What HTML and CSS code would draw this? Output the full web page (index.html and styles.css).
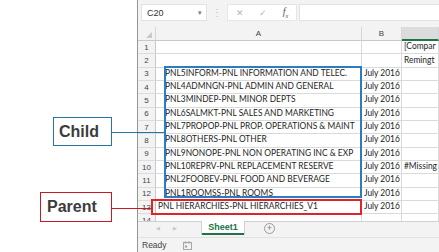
FILE: index.html
```html
<!DOCTYPE html>
<html lang="en">
<head>
    <meta charset="UTF-8">
    <title>PNL Hierarchies</title>
    <link rel="stylesheet" href="styles.css">
</head>
<body>
    <div class="shot">
        <div class="margin"></div>

        <div class="excel">
            <div class="fbar">
                <div class="namebox"><span>C20</span><span class="dd">&#9662;</span></div>
                <div class="grip">&#8942;</div>
                <div class="fbtns">
                    <span class="cancel">&#10005;</span>
                    <span class="ok">&#10003;</span>
                    <span class="fx">f<sub>x</sub></span>
                </div>
                <div class="finput"></div>
            </div>

            <div class="sheet">
                <div class="hd corner"><span class="tri"></span></div>
                <div class="hd">A</div>
                <div class="hd">B</div>
                <div class="hd sel"></div>

                <div class="rh">1</div><div class="c"></div><div class="c"></div><div class="c"><span>[Compar</span></div>
                <div class="rh">2</div><div class="c"></div><div class="c"></div><div class="c"><span>Remingt</span></div>
                <div class="rh">3</div><div class="c ind"><span>PNL5INFORM-PNL INFORMATION AND TELEC.</span></div><div class="c"><span>July 2016</span></div><div class="c"></div>
                <div class="rh">4</div><div class="c ind"><span>PNL4ADMNGN-PNL ADMIN AND GENERAL</span></div><div class="c"><span>July 2016</span></div><div class="c"></div>
                <div class="rh">5</div><div class="c ind"><span>PNL3MINDEP-PNL MINOR DEPTS</span></div><div class="c"><span>July 2016</span></div><div class="c"></div>
                <div class="rh">6</div><div class="c ind"><span>PNL6SALMKT-PNL SALES AND MARKETING</span></div><div class="c"><span>July 2016</span></div><div class="c"></div>
                <div class="rh">7</div><div class="c ind"><span>PNL7PROPOP-PNL PROP. OPERATIONS &amp; MAINT</span></div><div class="c"><span>July 2016</span></div><div class="c"></div>
                <div class="rh">8</div><div class="c ind"><span>PNL8OTHERS-PNL OTHER</span></div><div class="c"><span>July 2016</span></div><div class="c"></div>
                <div class="rh">9</div><div class="c ind"><span>PNL9NONOPE-PNL NON OPERATING INC &amp; EXP</span></div><div class="c"><span>July 2016</span></div><div class="c"></div>
                <div class="rh">10</div><div class="c ind"><span>PNL10REPRV-PNL REPLACEMENT RESERVE</span></div><div class="c"><span>July 2016</span></div><div class="c"><span>#Missing</span></div>
                <div class="rh">11</div><div class="c ind"><span>PNL2FOOBEV-PNL FOOD AND BEVERAGE</span></div><div class="c"><span>July 2016</span></div><div class="c"></div>
                <div class="rh">12</div><div class="c ind"><span>PNL1ROOMSS-PNL ROOMS</span></div><div class="c"><span>July 2016</span></div><div class="c"></div>
                <div class="rh">13</div><div class="c"><span>PNL HIERARCHIES-PNL HIERARCHIES_V1</span></div><div class="c"><span>July 2016</span></div><div class="c"></div>
                <div class="rh">14</div><div class="c"></div><div class="c"></div><div class="c"></div>
            </div>

            <div class="tabs">
                <span class="nav">&#9664;</span>
                <span class="nav">&#9654;</span>
                <div class="tab">Sheet1</div>
                <span class="add">+</span>
            </div>

            <div class="status">
                <span>Ready</span>
                <svg class="rec" width="9" height="9" viewBox="0 0 9 9">
                    <rect x="0.5" y="1.5" width="8" height="7" fill="none" stroke="#a8a8a8"/>
                    <rect x="1.5" y="0.5" width="2" height="2" fill="#a8a8a8"/>
                    <rect x="5" y="0.5" width="2" height="2" fill="#a8a8a8"/>
                    <circle cx="3" cy="5.5" r="1.2" fill="#a8a8a8"/>
                </svg>
            </div>
        </div>

        <!-- callouts drawn over the screenshot -->
        <div class="mark child-mark"></div>
        <div class="mark parent-mark"></div>
        <div class="link child-link"></div>
        <div class="link parent-link"></div>
        <div class="label child-label">Child</div>
        <div class="label parent-label">Parent</div>
    </div>
</body>
</html>
```

FILE: styles.css
```css
* {
    box-sizing: border-box;
}

body {
    margin: 0;
    background: #fff;
    font-family: "Liberation Sans", Arial, sans-serif;
}

.shot {
    position: relative;
    width: 439px;
    height: 252px;
    display: flex;
    overflow: hidden;
}

.margin {
    width: 137px;
    flex-shrink: 0;
    background: #fff;
}

.excel {
    flex: 1;
    display: flex;
    flex-direction: column;
    border-left: 1px solid #8e9a96;
    background: #f3f3f3;
    color: #444;
    font-size: 9px;
    overflow: hidden;
}

/* formula bar */
.fbar {
    height: 27px;
    display: flex;
    align-items: flex-start;
    padding: 4px 0 0 3px;
}

.namebox {
    width: 66px;
    height: 17px;
    background: #fff;
    border: 1px solid #e2e2e2;
    display: flex;
    align-items: center;
    justify-content: space-between;
    padding: 0 4px 0 5px;
    font-size: 9px;
    color: #333;
}

.namebox .dd {
    font-size: 7px;
    color: #777;
}

.grip {
    width: 20px;
    text-align: center;
    color: #c0c0c0;
    font-size: 10px;
    line-height: 17px;
}

.fbtns {
    width: 70px;
    height: 17px;
    background: #fff;
    border: 1px solid #e6e6e6;
    display: flex;
    align-items: center;
    justify-content: space-around;
    color: #b5b5b5;
    font-size: 9px;
}

.fbtns .fx {
    font-family: "Liberation Serif", serif;
    font-style: italic;
    color: #555;
    font-size: 10px;
}

.fbtns .fx sub {
    font-size: 6px;
}

.finput {
    flex: 1;
    height: 17px;
    margin-left: 2px;
    background: #fff;
    border: 1px solid #e2e2e2;
    border-right: none;
}

/* grid */
.sheet {
    height: 194px;
    display: grid;
    grid-template-columns: 18px 206px 40px 1fr;
    grid-template-rows: 14px;
    grid-auto-rows: 13.33px;
    background: #fff;
    overflow: hidden;
    font-family: Lato, "Liberation Sans", sans-serif;
    font-size: 9.6px;
    color: #1e1e1e;
}

.hd {
    background: #f3f3f3;
    border-right: 1px solid #d6d6d6;
    border-bottom: 1px solid #c8c8c8;
    display: flex;
    align-items: center;
    justify-content: center;
    font-family: "Liberation Sans", sans-serif;
    font-size: 8px;
    color: #444;
}

.hd.sel {
    background: #dcdcdc;
    border-bottom: 2px solid #217346;
}

.corner {
    position: relative;
}

.tri {
    position: absolute;
    right: 3px;
    bottom: 2px;
    width: 0;
    height: 0;
    border-left: 6px solid transparent;
    border-bottom: 6px solid #c8c8c8;
}

.rh {
    background: #f3f3f3;
    border-right: 1px solid #c8c8c8;
    border-bottom: 1px solid #dcdcdc;
    display: flex;
    align-items: center;
    justify-content: center;
    font-family: "Liberation Sans", sans-serif;
    font-size: 8px;
    color: #444;
}

.c {
    border-right: 1px solid #dadada;
    border-bottom: 1px solid #dadada;
    padding: 0 2px 3px;
    display: flex;
    align-items: center;
    white-space: nowrap;
    overflow: hidden;
}

/* Calibri is narrower than anything installed */
.c span {
    display: inline-block;
    transform: scaleX(0.875);
    transform-origin: 0 50%;
}

.c.ind {
    padding-left: 9px;
}

/* sheet tabs */
.tabs {
    height: 16px;
    display: flex;
    align-items: flex-start;
    padding-left: 18px;
    border-top: 1px solid #d0d0d0;
    color: #c4c4c4;
}

.nav {
    width: 17px;
    font-size: 5px;
    line-height: 13px;
}

.tab {
    margin-left: 12px;
    width: 42px;
    height: 14px;
    margin-top: -1px;
    background: #fff;
    border-bottom: 2px solid #217346;
    box-shadow: 1px 0 0 #d0d0d0, -1px 0 0 #d0d0d0;
    color: #217346;
    font-weight: bold;
    font-size: 9px;
    display: flex;
    align-items: center;
    justify-content: center;
}

.add {
    margin-left: 20px;
    margin-top: 1px;
    width: 11px;
    height: 11px;
    border: 1px solid #9a9a9a;
    border-radius: 50%;
    color: #777;
    font-size: 9px;
    line-height: 9px;
    text-align: center;
}

/* status bar */
.status {
    height: 15px;
    display: flex;
    align-items: center;
    gap: 16px;
    padding-left: 4px;
    font-size: 8.5px;
    color: #444;
    border-top: 1px solid #e2e2e2;
}

/* annotations */
.mark {
    position: absolute;
}

.child-mark {
    left: 164px;
    top: 66px;
    width: 198px;
    height: 132px;
    border: 2px solid #2f7bc0;
}

.parent-mark {
    left: 151px;
    top: 199px;
    width: 211px;
    height: 16px;
    border: 2px solid #e0232b;
}

.link {
    position: absolute;
    height: 1px;
}

.child-link {
    left: 112px;
    top: 132px;
    width: 52px;
    background: #2574a6;
}

.parent-link {
    left: 112px;
    top: 208px;
    width: 39px;
    background: #c81a24;
}

.label {
    position: absolute;
    background: #fff;
    display: flex;
    align-items: center;
    font-weight: bold;
    font-size: 16px;
    color: #3c3c3c;
}

.child-label {
    left: 53px;
    top: 117px;
    width: 59px;
    height: 29px;
    padding-left: 5px;
    border: 1px solid #2574a6;
}

.parent-label {
    left: 40px;
    top: 192px;
    width: 72px;
    height: 30px;
    padding-left: 6px;
    border: 1px solid #c81a24;
}
```
